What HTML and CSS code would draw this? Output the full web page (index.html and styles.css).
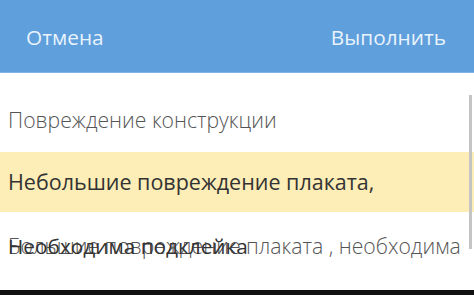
FILE: index.html
```html
<!DOCTYPE html>
<html lang="ru">
<head>
<meta charset="utf-8">
<link rel="stylesheet" href="styles.css">
</head>
<body>
<div class="screen">
  <header class="bar">
    <span class="btn">Отмена</span>
    <span class="btn">Выполнить</span>
  </header>
  <main class="list">
    <div class="row row-first"><span class="item light muted">Повреждение конструкции</span></div>
    <div class="row row-selected"><span class="item dark">Небольшие повреждение плаката,</span></div>
    <div class="row row-last">
      <div class="stack">
        <span class="item light muted">Большие повреждение плаката , необходима</span>
        <span class="item dark overlay">Необходима подклейка</span>
      </div>
    </div>
    <div class="scrollbar"></div>
  </main>
  <footer class="navbar"></footer>
</div>
</body>
</html>
```
FILE: styles.css
```css
* { box-sizing: border-box; }
html, body { margin: 0; padding: 0; }
body {
  width: 474px;
  height: 295px;
  overflow: hidden;
  background: #ffffff;
  font-family: "Open Sans", "Noto Sans", sans-serif;
}
.screen {
  display: flex;
  flex-direction: column;
  height: 295px;
}
.bar {
  height: 73px;
  background: #5e9fdc;
  display: flex;
  justify-content: space-between;
  align-items: center;
  padding: 0 28px 0 26px;
  border-bottom: 1px solid #7fb3e4;
}
.btn {
  color: #e9f3fc;
  font-size: 20.8px;
  line-height: 24px;
  padding-top: 2px;
}
.list {
  position: relative;
  flex: 1;
  display: flex;
  flex-direction: column;
}
.row {
  display: flex;
  align-items: center;
  padding: 0 8px;
}
.row-first { height: 79px; padding-top: 14px; }
.row-selected { height: 60px; background: #fdedb6; padding-top: 0; }
.row-last { height: 78px; padding-bottom: 10px; }
.item {
  font-size: 21.5px;
  line-height: 26px;
  white-space: nowrap;
}
.item.light { font-size: 21.2px; font-weight: 300; }
.item.overlay { font-size: 20.8px; }
.muted { color: #555555; }
.dark { color: #333333; }
.stack {
  display: grid;
  align-items: center;
}
.stack > .item { grid-area: 1 / 1; }
.scrollbar {
  position: absolute;
  right: 2px;
  top: 22px;
  width: 3px;
  height: 154px;
  background: #c4c4c4;
}
.navbar {
  height: 5px;
  background: #111111;
}
```
